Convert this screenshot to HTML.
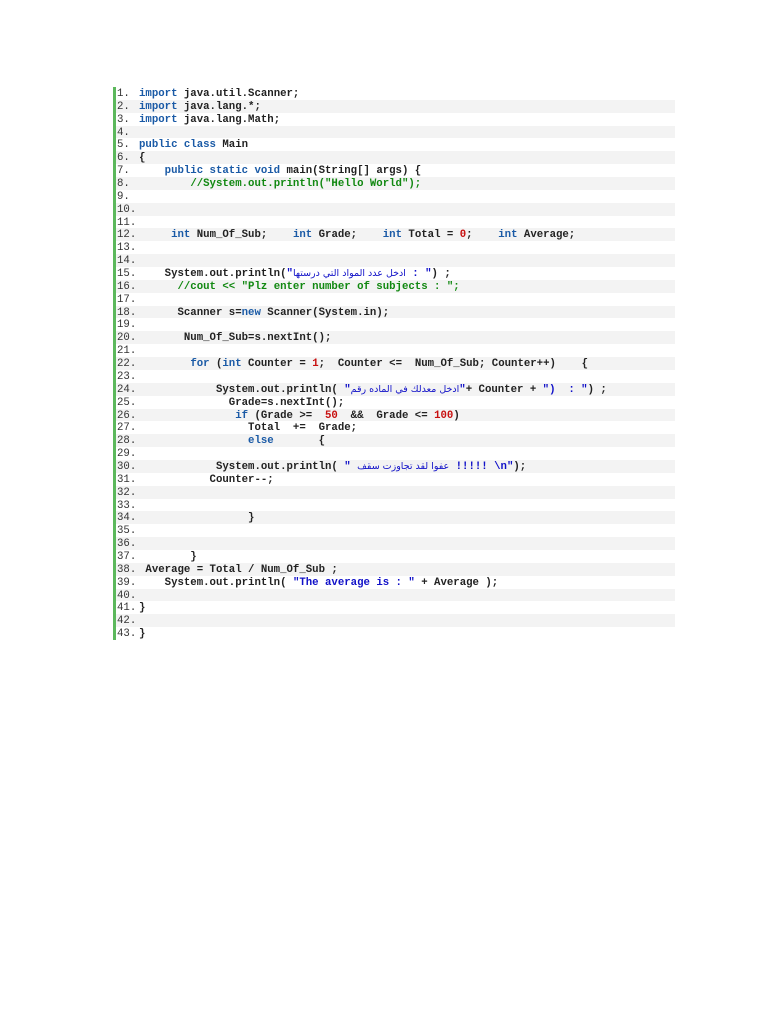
<!DOCTYPE html>
<html><head><meta charset="utf-8"><style>
body{margin:0;background:#fff;width:768px;height:1024px;position:relative;overflow:hidden}
.bar{position:absolute;left:113px;top:87px;width:3px;height:553px;background:#5cb85c}
.r{position:absolute;left:116px;width:559px;height:12.86px}
.g{background:#f3f3f3}
.n,.c{position:absolute;top:1px;font:bold 10.7px/12.86px "Liberation Mono","DejaVu Sans",monospace;color:#222;white-space:pre}
.n{left:1px;font-weight:normal;color:#333}
.c{left:23px}
.k{color:#1a5aa6}.s{color:#1010c8}.m{color:#118811}.d{color:#c81010}
.a{font:9.5px "DejaVu Sans",sans-serif}
</style></head><body>
<div class="bar"></div>
<div id="w"></div>
<script>
var L=[
'<span class="k">import</span> java.util.Scanner;',
'<span class="k">import</span> java.lang.*;',
'<span class="k">import</span> java.lang.Math;',
'',
'<span class="k">public class</span> Main',
'{',
'    <span class="k">public static void</span> main(String[] args) {',
'        <span class="m">//System.out.println("Hello World");</span>',
'','','',
'     <span class="k">int</span> Num_Of_Sub;    <span class="k">int</span> Grade;    <span class="k">int</span> Total = <span class="d">0</span>;    <span class="k">int</span> Average;',
'','',
'    System.out.println(<span class="s">"<bdi class="a">ادخل عدد المواد التي درستها</bdi> : "</span>) ;',
'      <span class="m">//cout &lt;&lt; "Plz enter number of subjects : ";</span>',
'',
'      Scanner s=<span class="k">new</span> Scanner(System.in);',
'',
'       Num_Of_Sub=s.nextInt();',
'',
'        <span class="k">for</span> (<span class="k">int</span> Counter = <span class="d">1</span>;  Counter &lt;=  Num_Of_Sub; Counter++)    {',
'',
'            System.out.println( <span class="s">"<bdi class="a">ادخل معدلك في الماده رقم</bdi>"</span>+ Counter + <span class="s">")  : "</span>) ;',
'              Grade=s.nextInt();',
'               <span class="k">if</span> (Grade &gt;=  <span class="d">50</span>  &amp;&amp;  Grade &lt;= <span class="d">100</span>)',
'                 Total  +=  Grade;',
'                 <span class="k">else</span>       {',
'',
'            System.out.println( <span class="s">" <bdi class="a">عفوا لقد تجاوزت سقف</bdi> !!!!! \\n"</span>);',
'           Counter--;',
'','',
'                 }',
'','',
'        }',
' Average = Total / Num_Of_Sub ;',
'    System.out.println( <span class="s">"The average is : "</span> + Average );',
'',
'}',
'',
'}'];
var h='';
for(var i=0;i<L.length;i++){
h+='<div class="r'+(i%2?' g':'')+'" style="top:'+(87+i*12.86)+'px"><span class="n">'+(i+1)+'.</span><span class="c">'+L[i]+'</span></div>';
}
document.getElementById('w').innerHTML=h;
</script>
</body></html>
